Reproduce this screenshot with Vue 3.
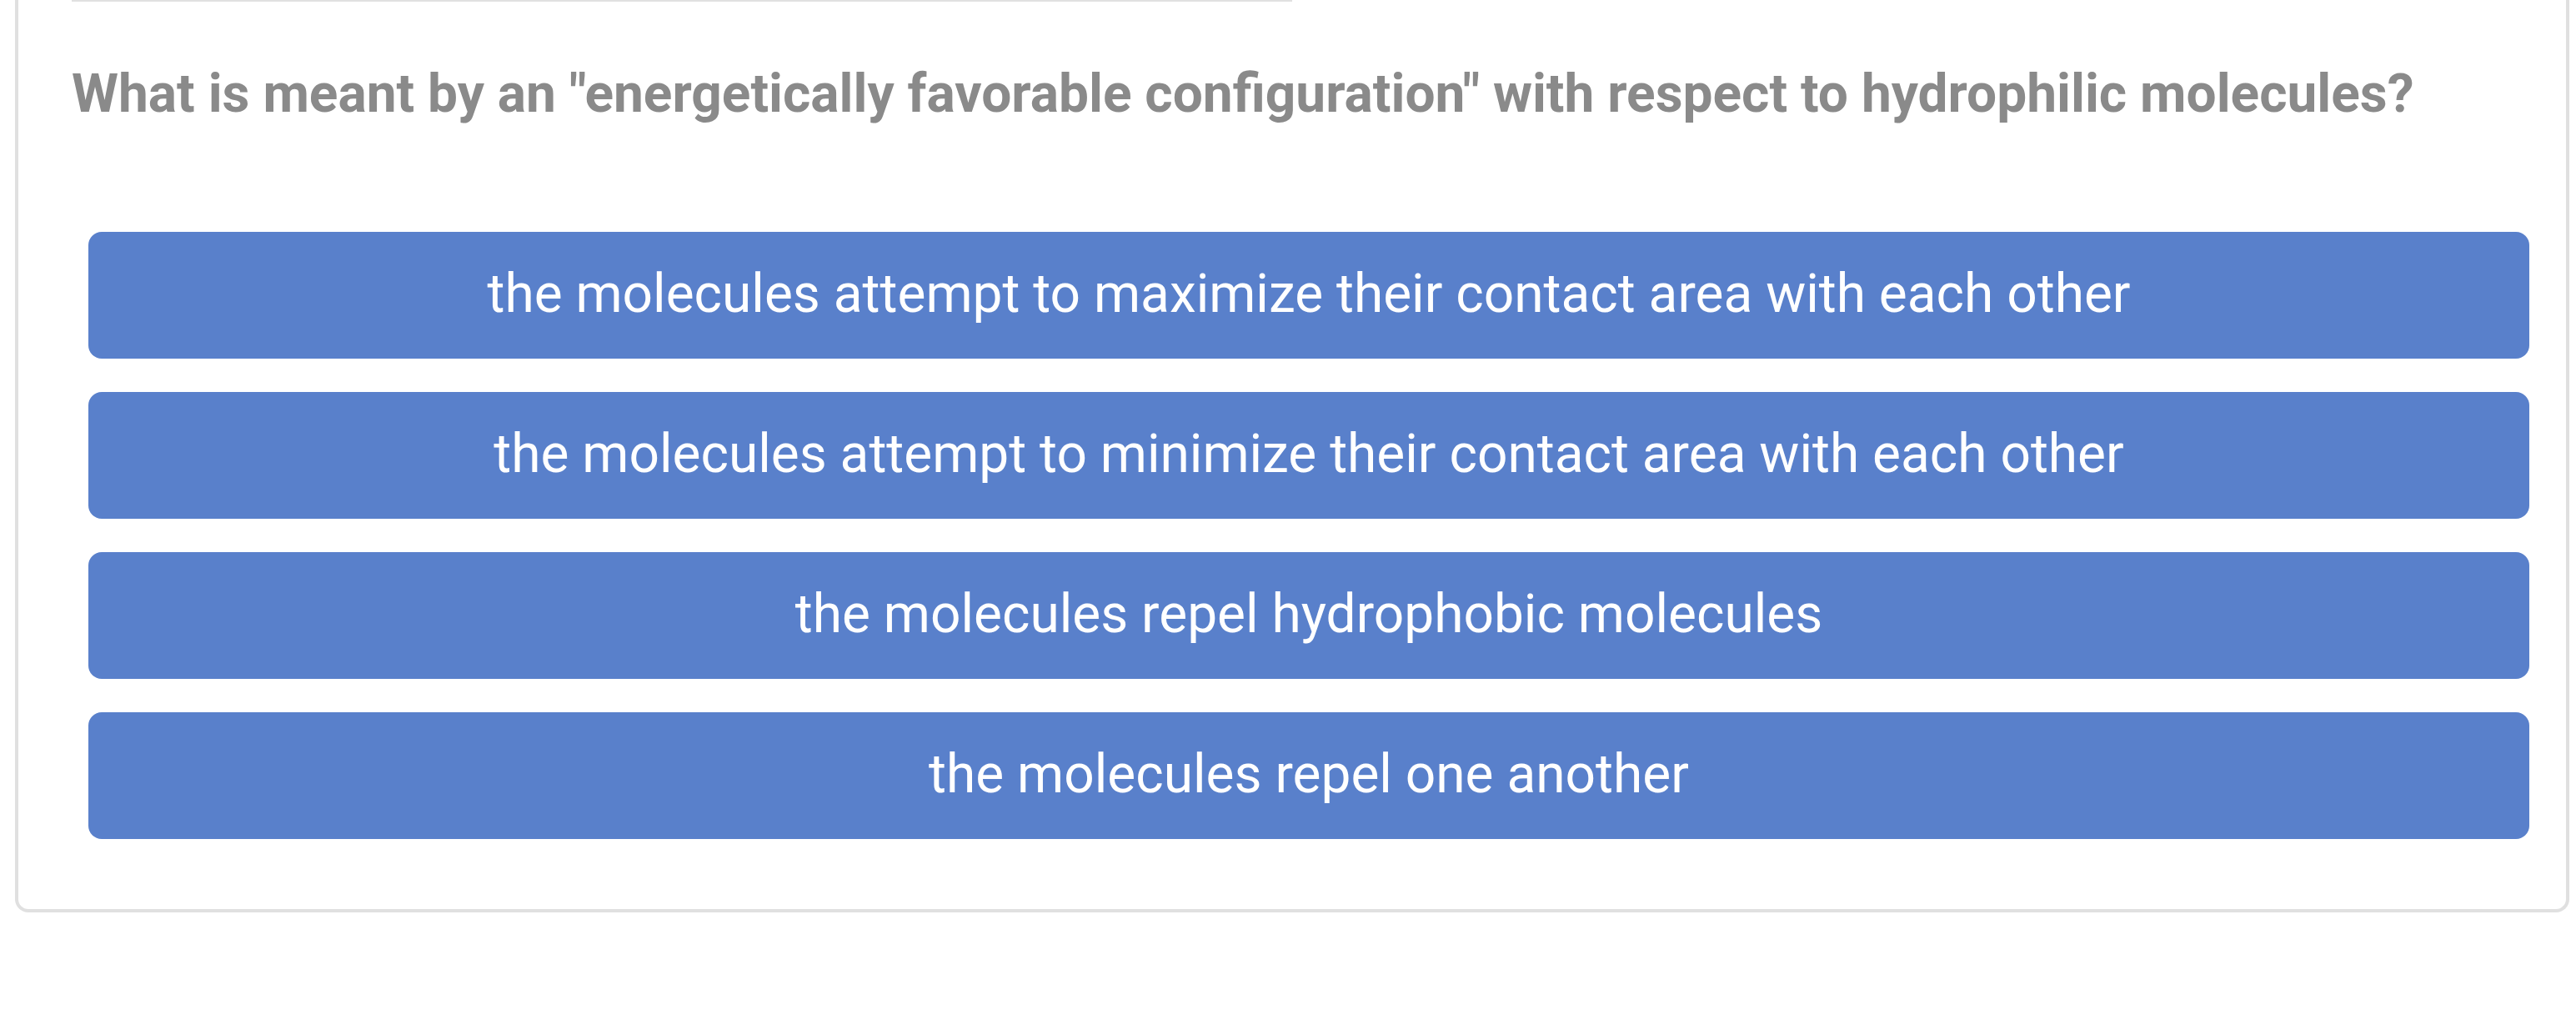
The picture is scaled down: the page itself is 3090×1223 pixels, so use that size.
<script setup>
const question = 'What is meant by an "energetically favorable configuration" with respect to hydrophilic molecules?'
const answers = [
  'the molecules attempt to maximize their contact area with each other',
  'the molecules attempt to minimize their contact area with each other',
  'the molecules repel hydrophobic molecules',
  'the molecules repel one another',
]
</script>

<template>
  <main class="card">
    <div class="rule"></div>
    <h1 class="question">{{ question }}</h1>
    <div class="answers">
      <button v-for="answer in answers" :key="answer" type="button" class="answer">{{ answer }}</button>
    </div>
  </main>
</template>

<style>
body {
  margin: 0;
  background: #fff;
}
</style>

<style scoped>
.card {
  box-sizing: border-box;
  margin: 0 8px 0 18px;
  padding: 0 44px 84px 64px;
  border: 4px solid #e0e0e0;
  border-top: 0;
  border-radius: 0 0 16px 16px;
  font-family: Roboto, sans-serif;
}

.rule {
  width: calc(50% - 10px);
  height: 2px;
  background: #e0e0e0;
}

.question {
  margin: 71px 0 0;
  color: #8a8a8a;
  font-size: 64px;
  font-weight: 700;
  line-height: 80px;
}

.answers {
  display: flex;
  flex-direction: column;
  gap: 40px;
  margin: 125px 0 0 20px;
}

.answer {
  height: 152px;
  padding: 0 32px 2px;
  border: 0;
  border-radius: 16px;
  background: #5980cb;
  color: #fff;
  font: 400 64px/80px Roboto, sans-serif;
  cursor: pointer;
}
</style>
